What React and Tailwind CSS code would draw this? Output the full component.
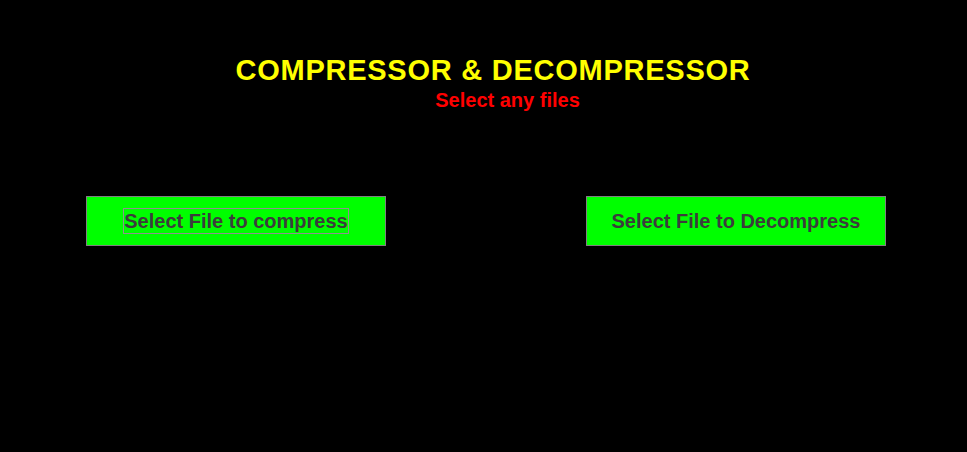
export default function App() {
  return (
    <div className="min-h-screen w-full bg-black font-['Liberation_Sans',Arial,sans-serif]">
      <div className="flex flex-col items-center pt-[53px]">
        <h1 className="pl-[19px] text-[29px] font-bold leading-[34px] tracking-[0.75px] text-[#ffff00]">
          COMPRESSOR &amp; DECOMPRESSOR
        </h1>
        <p className="pl-[48px] text-[20px] font-bold leading-[26px] text-[#ff0000]">Select any files</p>
      </div>
      <div className="flex gap-[200px] pl-[86px] pt-[83px]">
        <button
          type="button"
          className="flex h-[50px] w-[300px] items-center justify-center border border-[#808080] bg-[#00ff00] text-[20px] font-bold text-[#3c3c3c]"
        >
          <span className="inline-block border border-[#909090] leading-[24px]">Select File to compress</span>
        </button>
        <button
          type="button"
          className="flex h-[50px] w-[300px] items-center justify-center border border-[#808080] bg-[#00ff00] text-[20px] font-bold text-[#3c3c3c]"
        >
          Select File to Decompress
        </button>
      </div>
    </div>
  );
}
